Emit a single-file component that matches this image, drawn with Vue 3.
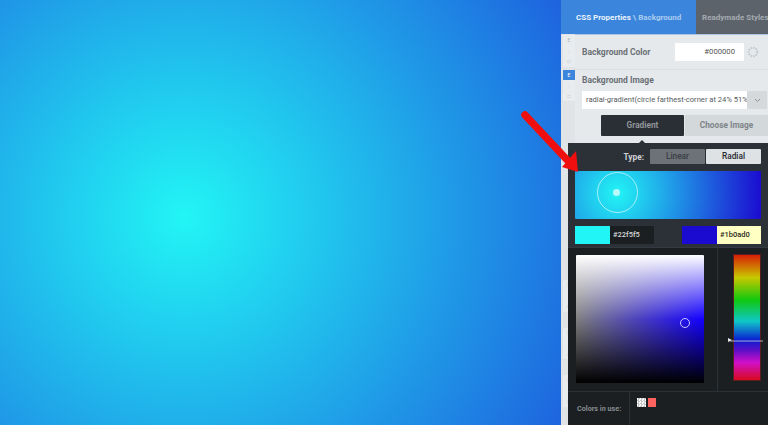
<script setup>
const railGroups = [
  { id: 'a', cls: 'g1' },
  { id: 'b', cls: 'g2', active: true },
  { id: 'c', cls: 'g3' },
  { id: 'd', cls: 'g4' },
  { id: 'e', cls: 'g4' }
]
const marks = ['E', ':', '□']
</script>

<template>
  <div class="page">
    <div class="canvas">
      <svg class="arrow" width="70" height="70" viewBox="0 0 70 70">
        <path d="M10 10 L55 58" stroke="#f00f0f" stroke-width="7.5" stroke-linecap="round" fill="none" />
        <path d="M63 67 L47 62 L61 46 Z" fill="#f00f0f" />
      </svg>
    </div>
    <aside class="panel">
      <div class="tabs">
        <div class="tab active"><b>CSS Properties</b> <span>\ Background</span></div>
        <div class="tab other">Readymade Styles</div>
      </div>
      <div class="body">
        <div class="rail">
          <div class="rail-group" v-for="g in railGroups" :key="g.id" :class="g.cls">
            <div class="rail-item" v-for="(m, i) in marks" :key="i" :class="{ on: g.active && i === 0 }">{{ m }}</div>
          </div>
        </div>
        <div class="content">
          <div class="row bgcolor">
            <label>Background Color</label>
            <div class="color-input">#000000</div>
            <svg class="spinner" width="12" height="12" viewBox="0 0 12 12">
              <circle cx="6" cy="6" r="4.3" fill="none" stroke="#c3c9cd" stroke-width="2" stroke-dasharray="1.5 1" />
            </svg>
          </div>
          <div class="bgimage">
            <label>Background Image</label>
            <div class="select">
              <div class="select-text">radial-gradient(circle farthest-corner at 24% 51%</div>
              <div class="select-btn">
                <svg width="7" height="5" viewBox="0 0 7 5"><path d="M1 1 L3.5 3.5 L6 1" fill="none" stroke="#8b9297" stroke-width="1" /></svg>
              </div>
            </div>
            <div class="switch">
              <div class="sw on">Gradient</div>
              <div class="sw">Choose Image</div>
            </div>
          </div>
        </div>
      </div>

      <div class="popup">
        <div class="pop-top">
          <div class="type-row">
            <span class="type-label">Type:</span>
            <div class="type-btn">Linear</div>
            <div class="type-btn sel">Radial</div>
          </div>
          <div class="preview">
            <div class="ring"></div>
            <div class="dot"></div>
          </div>
          <div class="stops">
            <div class="stop">
              <div class="swatch cyan"></div>
              <div class="hex">#22f5f5</div>
            </div>
            <div class="stop">
              <div class="swatch blue"></div>
              <div class="hex light">#1b0ad0</div>
            </div>
          </div>
        </div>
        <div class="picker">
          <div class="sat-cell">
            <div class="sat">
              <div class="handle"></div>
            </div>
          </div>
          <div class="hue-cell">
            <div class="hue"></div>
            <div class="hue-mark"></div>
            <div class="hue-tri"></div>
          </div>
        </div>
        <div class="inuse">
          <div class="inuse-label">Colors in use:</div>
          <div class="inuse-swatches">
            <div class="mini checker"></div>
            <div class="mini red"></div>
          </div>
        </div>
      </div>
    </aside>
  </div>
</template>

<style>
html, body { margin: 0; padding: 0; overflow: hidden; }
</style>

<style scoped>
.page {
  width: 768px;
  height: 425px;
  display: flex;
  overflow: hidden;
  position: relative;
  font-family: Roboto, "Liberation Sans", Arial, sans-serif;
  background: radial-gradient(circle farthest-corner at 24% 51%, #22f5f5, #1b0ad0 112%);
}
.canvas { flex: 0 0 561px; position: relative; z-index: 2; }
.arrow { position: absolute; left: 515px; top: 105px; }
.panel {
  flex: 0 0 207px;
  width: 207px;
  background: #e6e9ec;
  position: relative;
  display: flex;
  flex-direction: column;
}
.tabs { display: flex; height: 34px; font-size: 8px; font-weight: 700; box-shadow: 0 1px 0 #a9c4e4; }
.tab { display: flex; align-items: center; white-space: nowrap; overflow: hidden; }
.tab.active { flex: 0 0 135px; background: #3b86dc; color: #eaf2fb; padding-left: 15px; box-sizing: border-box; gap: 2px; }
.tab.active b { font-weight: 700; }
.tab.active span { color: #a9cbf0; font-weight: 700; }
.tab.other { flex: 1; background: #5c636b; color: #a5aab0; padding-left: 6px; }
.body { flex: 1; display: flex; min-height: 0; }
.rail { flex: 0 0 14px; background: #e0e4e7; padding-left: 2px; box-sizing: border-box; }
.rail-group { background: #e9ecee; }
.g1 { margin-top: 1px; }
.g2 { margin-top: 3px; }
.g3 { margin-top: 179px; }
.g4 { margin-top: 16px; }
.rail-item { height: 10.5px; font-size: 5px; line-height: 10.5px; text-align: center; color: #aeb5bb; }
.rail-item.on { background: #3b86dc; color: #fff; }
.content { flex: 1; min-width: 0; font-size: 8.5px; color: #6a7075; font-weight: 700; }
label { display: block; }
.row.bgcolor {
  display: flex;
  align-items: center;
  height: 35px;
  padding-left: 7px;
  border-bottom: 1px solid #dcdfe2;
}
.bgcolor label { width: 93px; }
.color-input {
  width: 69px;
  height: 18px;
  background: #fff;
  color: #555;
  font-size: 7.7px;
  font-weight: 400;
  line-height: 18px;
  text-align: right;
  padding-right: 9px;
  box-sizing: border-box;
}
.spinner { margin-left: 3px; }
.bgimage { padding: 5px 0 0 7px; }
.select { display: flex; margin-top: 6px; height: 18px; width: 185px; }
.select-text {
  width: 165px;
  background: #fff;
  color: #555b60;
  font-size: 7.6px;
  font-weight: 400;
  line-height: 18px;
  padding-left: 4px;
  box-sizing: border-box;
  white-space: nowrap;
}
.select-btn { width: 20px; background: #d5d9dc; display: flex; align-items: center; justify-content: center; }
.switch { display: flex; margin: 6px 0 0 19px; height: 21px; gap: 1px; }
.sw {
  width: 83px;
  background: #d3d8db;
  color: #7e8489;
  text-align: center;
  line-height: 21px;
  font-size: 8.3px;
}
.sw.on { background: #2a2e35; color: #90959a; border-radius: 1px; }
.popup {
  position: absolute;
  left: 7px;
  top: 143px;
  width: 200px;
  height: 282px;
  background: #1b1f22;
  display: flex;
  flex-direction: column;
}
.popup::before {
  content: "";
  position: absolute;
  top: -3px;
  left: 71px;
  border: 3px solid transparent;
  border-top: 0;
  border-bottom-color: #2c3138;
}
.pop-top { background: #2c3138; height: 105px; box-sizing: border-box; padding: 6px 7px 0; border-bottom: 1px solid #343a40; }
.type-row { display: flex; align-items: center; justify-content: flex-end; height: 15px; gap: 1px; }
.type-label { color: #cfd2d5; font-size: 8.3px; font-weight: 700; margin-right: 5px; }
.type-btn {
  width: 55px;
  height: 15px;
  background: #6d7278;
  color: #3a3e43;
  font-size: 8.3px;
  font-weight: 500;
  line-height: 15px;
  text-align: center;
  border-radius: 1px;
}
.type-btn.sel { background: #dfe2e5; color: #25282c; }
.preview {
  position: relative;
  margin-top: 7px;
  height: 48px;
  border-radius: 1px;
  background: radial-gradient(circle farthest-corner at 22.5% 46%, #22f5f5, #1b0ad0);
}
.ring {
  position: absolute;
  left: 22px;
  top: 1px;
  width: 39px;
  height: 39px;
  border: 1px solid rgba(255, 255, 255, .6);
  border-radius: 50%;
}
.dot {
  position: absolute;
  left: 38px;
  top: 18px;
  width: 7px;
  height: 7px;
  border-radius: 50%;
  background: #b9f8fb;
}
.stops { display: flex; justify-content: space-between; margin-top: 7px; }
.stop { display: flex; height: 18px; width: 79px; }
.swatch { width: 35px; }
.swatch.cyan { background: #22f5f5; }
.swatch.blue { background: #1b0ad0; }
.hex {
  flex: 1;
  background: #1b1f22;
  color: #d5d8da;
  font-size: 7.5px;
  font-weight: 500;
  line-height: 18px;
  padding-left: 3px;
}
.hex.light { background: #ffffc4; color: #2a2a20; }
.picker { display: flex; height: 143px; border-bottom: 1px solid #2c3135; }
.sat-cell { flex: 0 0 150px; padding: 7px 0 0 8px; box-sizing: border-box; border-right: 1px solid #2c3135; }
.sat {
  position: relative;
  width: 128px;
  height: 128px;
  border-radius: 1px;
  overflow: hidden;
  background:
    linear-gradient(180deg, #fff 0%, rgba(255, 255, 255, 0) 50%),
    linear-gradient(0deg, #000 0%, rgba(0, 0, 0, 0) 50%),
    linear-gradient(90deg, #808080, #1400ff);
}
.handle {
  position: absolute;
  left: 104px;
  top: 63px;
  width: 8px;
  height: 8px;
  border: 1px solid #c9c6ff;
  border-radius: 50%;
}
.hue-cell { flex: 1; position: relative; }
.hue {
  position: absolute;
  left: 15px;
  top: 6px;
  width: 26px;
  height: 125px;
  border: 1px solid #5a1c1c;
  background: linear-gradient(180deg, #d81e06 0%, #c8c800 18%, #10c810 36%, #10c8c8 53%, #0a1ed0 68%, #5a10c8 76%, #d010c8 86%, #d80a20 100%);
}
.hue-mark { position: absolute; left: 12px; top: 92px; width: 33px; height: 2px; background: rgba(200, 200, 220, .42); }
.hue-tri {
  position: absolute;
  left: 10px;
  top: 90px;
  border-left: 4px solid #e8e8e8;
  border-top: 2.5px solid transparent;
  border-bottom: 2.5px solid transparent;
}
.inuse { display: flex; flex: 1; }
.inuse-label {
  flex: 0 0 62px;
  box-sizing: border-box;
  border-right: 1px solid #2c3135;
  color: #868c91;
  font-size: 7.2px;
  font-weight: 700;
  padding: 12px 0 0 9px;
}
.inuse-swatches { display: flex; gap: 2px; padding: 6px 0 0 7px; }
.mini { width: 8.5px; height: 8.5px; }
.mini.red { background: #fb6260; }
.mini.checker {
  background: repeating-conic-gradient(#c4c4c4 0 25%, #fff 0 50%) 0 0 / 3px 3px;
}
</style>
